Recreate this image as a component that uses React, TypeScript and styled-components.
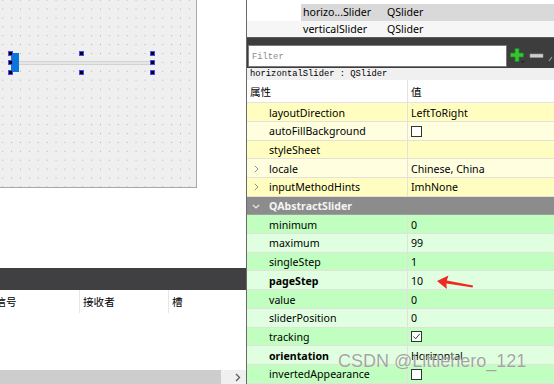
import React from 'react';
import styled, { createGlobalStyle } from 'styled-components';

const GlobalStyle = createGlobalStyle`
  html, body { margin: 0; padding: 0; background: #fff; overflow: hidden; }
  body {
    font-family: "Noto Sans", "Noto Sans CJK SC", sans-serif;
    font-size: 10.6px;
    color: #000;
  }
`;

type Prop = {
    name: string;
    value?: string;
    check?: boolean;
    bold?: boolean;
    expand?: boolean;
};

const widgetProps: Prop[] = [
    { name: 'layoutDirection', value: 'LeftToRight' },
    { name: 'autoFillBackground', check: false },
    { name: 'styleSheet', value: '' },
    { name: 'locale', value: 'Chinese, China', expand: true },
    { name: 'inputMethodHints', value: 'ImhNone', expand: true },
];

const sliderProps: Prop[] = [
    { name: 'minimum', value: '0' },
    { name: 'maximum', value: '99' },
    { name: 'singleStep', value: '1' },
    { name: 'pageStep', value: '10', bold: true },
    { name: 'value', value: '0' },
    { name: 'sliderPosition', value: '0' },
    { name: 'tracking', check: true },
    { name: 'orientation', value: 'Horizontal', bold: true },
    { name: 'invertedAppearance', check: false },
];

const handles = [
    [10.5, 53.5], [10.5, 62.8], [10.5, 72.2],
    [81.8, 53.5], [81.8, 72.2],
    [152.8, 53.5], [152.8, 62.8], [152.8, 72.2],
];

const Check: React.FC<{ on: boolean }> = ({ on }) => (
    <CheckBox>
        {on && (
            <svg width="9" height="9" viewBox="0 0 9 9">
                <path d="M1.5 4.5 L3.6 6.8 L7.8 1.8" fill="none" stroke="#333" strokeWidth="1" />
            </svg>
        )}
    </CheckBox>
);

const PropRow: React.FC<{ p: Prop; hue: 'yellow' | 'green'; alt: boolean }> = ({ p, hue, alt }) => (
    <Row $hue={hue} $alt={alt}>
        <NameCell $bold={p.bold}>
            <Branch>
                {p.expand && (
                    <svg width="5" height="8" viewBox="0 0 5 8">
                        <path d="M0.8 0.8 L4 4 L0.8 7.2" fill="none" stroke="#909090" strokeWidth="1" />
                    </svg>
                )}
            </Branch>
            {p.name}
        </NameCell>
        <ValueCell>{p.check !== undefined ? <Check on={p.check} /> : p.value}</ValueCell>
    </Row>
);

export default function App() {
    return (
        <Page>
            <GlobalStyle />
            <LeftPane>
                <DesignArea>
                    <Canvas>
                        <Groove />
                        <SliderThumb />
                        {handles.map(([x, y], i) => (
                            <Handle key={i} style={{ left: x - 2.5, top: y - 2.5 }} />
                        ))}
                    </Canvas>
                </DesignArea>
                <SignalBar />
                <SignalHeader>
                    <HeadCell>
                        <Clip>信号</Clip>
                    </HeadCell>
                    <HeadCell>接收者</HeadCell>
                    <HeadCell>槽</HeadCell>
                </SignalHeader>
                <SignalBody />
                <HScroll>
                    <Thumb />
                    <ScrollArrow>
                        <svg width="6" height="9" viewBox="0 0 6 9">
                            <path d="M1 1 L4.5 4.5 L1 8" fill="none" stroke="#606060" strokeWidth="1.4" />
                        </svg>
                    </ScrollArrow>
                </HScroll>
            </LeftPane>

            <RightPane>
                <ObjectList>
                    <CutRow />
                    <ObjRow>
                        <ObjIndent />
                        <ObjCells $selected>
                            <ObjName>horizo...Slider</ObjName>
                            <span>QSlider</span>
                        </ObjCells>
                    </ObjRow>
                    <ObjRow $alt>
                        <ObjIndent />
                        <ObjCells>
                            <ObjName>verticalSlider</ObjName>
                            <span>QSlider</span>
                        </ObjCells>
                    </ObjRow>
                </ObjectList>
                <Toolbar>
                    <FilterInput>Filter</FilterInput>
                    <ToolButton>
                        <svg width="16" height="16" viewBox="0 0 16 16">
                            <path d="M5 0.5 H9 V5 H13.5 V9 H9 V13.5 H5 V9 H0.5 V5 H5 Z" fill="#35c435" stroke="#1e8a1e" strokeWidth="0.8" />
                            <path d="M11 13 H15 L13 15 Z" fill="#222" />
                        </svg>
                    </ToolButton>
                    <ToolButton>
                        <svg width="16" height="16" viewBox="0 0 16 16">
                            <rect x="1" y="6" width="13" height="3.5" fill="#cfcfcf" stroke="#9a9a9a" strokeWidth="0.6" />
                        </svg>
                    </ToolButton>
                    <ToolButton>
                        <svg width="6" height="16" viewBox="0 0 6 16">
                            <path d="M1 13 L4 9" stroke="#9a9a9a" strokeWidth="1.2" />
                        </svg>
                    </ToolButton>
                </Toolbar>
                <ClassLabel>horizontalSlider : QSlider</ClassLabel>
                <TableHeader>
                    <HeaderCell>属性</HeaderCell>
                    <HeaderCell>值</HeaderCell>
                </TableHeader>
                {widgetProps.map((p, i) => (
                    <PropRow key={p.name} p={p} hue="yellow" alt={i % 2 === 1} />
                ))}
                <GroupRow>
                    <Branch>
                        <svg width="8" height="5" viewBox="0 0 8 5">
                            <path d="M0.8 0.8 L4 4 L7.2 0.8" fill="none" stroke="#f0f0f0" strokeWidth="1.2" />
                        </svg>
                    </Branch>
                    QAbstractSlider
                </GroupRow>
                {sliderProps.map((p, i) => (
                    <PropRow key={p.name} p={p} hue="green" alt={i % 2 === 1} />
                ))}
            </RightPane>

            <Arrow width="42" height="20" viewBox="0 0 42 20">
                <path d="M3 8 L14.5 2.5 L12.8 7.4 L39 12.6 L38.6 14.6 L12.4 10.6 L12.8 16 Z" fill="#ee2a24" />
            </Arrow>
            <Watermark>CSDN @Littlehero_121</Watermark>
        </Page>
    );
}

const Page = styled.div`
    position: relative;
    display: flex;
    width: 554px;
    height: 384px;
    overflow: hidden;
`;

const LeftPane = styled.div`
    width: 246px;
    display: flex;
    flex-direction: column;
`;

const DesignArea = styled.div`
    height: 268px;
    background: #fff;
`;

const Canvas = styled.div`
    position: relative;
    width: 196px;
    height: 187px;
    border-right: 1px solid #a8a8a8;
    border-bottom: 1px solid #a8a8a8;
    background-color: #efefef;
    background-image: radial-gradient(circle, #b0b0b0 0.6px, transparent 0.95px);
    background-size: 8.9px 8.9px;
    background-position: -1.75px 4.6px;
`;

const Groove = styled.div`
    position: absolute;
    left: 11px;
    top: 60.5px;
    width: 141px;
    height: 2px;
    background: #e6e6e6;
    border: 1px solid #d2d2d2;
`;

const SliderThumb = styled.div`
    position: absolute;
    left: 11px;
    top: 53px;
    width: 8px;
    height: 19px;
    background: #0a78d6;
`;

const Handle = styled.div`
    position: absolute;
    width: 3px;
    height: 3px;
    background: #000;
    border: 1px solid #4848ff;
`;

const SignalBar = styled.div`
    height: 22px;
    background: #404042;
`;

const SignalHeader = styled.div`
    height: 23px;
    display: grid;
    grid-template-columns: 80px 89px 1fr;
    background: #fff;
`;

const HeadCell = styled.div`
    display: flex;
    align-items: center;
    padding-left: 3px;
    overflow: hidden;
    white-space: nowrap;
    border-right: 1px solid #e6e6e6;
    &:first-child {
        padding-left: 0;
    }
    &:last-child {
        border-right: none;
    }
`;

const Clip = styled.span`
    margin-left: -4.5px;
`;

const SignalBody = styled.div`
    flex: 1;
    background: #fff;
`;

const HScroll = styled.div`
    height: 14px;
    display: flex;
    background: #f0f0f0;
`;

const Thumb = styled.div`
    width: 221px;
    background: #cdcdcd;
`;

const ScrollArrow = styled.div`
    flex: 1;
    display: flex;
    align-items: center;
    justify-content: flex-end;
    padding-right: 5px;
`;

const RightPane = styled.div`
    flex: 1;
    display: flex;
    flex-direction: column;
    border-left: 1px solid #6a6a6a;
`;

const ObjectList = styled.div`
    height: 37px;
    background: #fff;
    border-bottom: 1px solid #5a5a5a;
`;

const CutRow = styled.div`
    height: 4px;
    background: #fff;
`;

const ObjRow = styled.div<{ $alt?: boolean }>`
    height: 16.5px;
    display: flex;
    background: ${(p) => (p.$alt ? '#f6f6f6' : '#fff')};
`;

const ObjIndent = styled.div`
    width: 54px;
`;

const ObjCells = styled.div<{ $selected?: boolean }>`
    flex: 1;
    display: flex;
    align-items: center;
    padding-left: 2px;
    background: ${(p) => (p.$selected ? '#d9d9d9' : 'transparent')};
`;

const ObjName = styled.span`
    width: 84px;
`;

const Toolbar = styled.div`
    height: 30px;
    display: flex;
    align-items: flex-end;
    background: #3d3d3d;
    padding: 0 0 1px 1px;
    box-sizing: border-box;
`;

const FilterInput = styled.div`
    width: 259px;
    height: 22px;
    box-sizing: border-box;
    background: #fff;
    border: 1px solid #7a7a7a;
    padding: 1px 3px 0;
    display: flex;
    align-items: center;
    font-family: "Liberation Mono", monospace;
    font-size: 8.8px;
    color: #8a8a8a;
`;

const ToolButton = styled.div`
    height: 22px;
    display: flex;
    align-items: center;
    margin-left: 3px;
`;

const ClassLabel = styled.div`
    height: 12px;
    line-height: 13px;
    background: #f0f0f0;
    padding-left: 3px;
    font-family: "Liberation Mono", monospace;
    font-size: 8.8px;
    white-space: nowrap;
`;

const TableHeader = styled.div`
    height: 23.3px;
    display: grid;
    grid-template-columns: 161px 1fr;
    background: #fff;
    box-sizing: border-box;
    border-bottom: 1px solid #e3e3e3;
`;

const HeaderCell = styled.div`
    display: flex;
    align-items: center;
    padding: 1px 0 0 3px;
    &:first-child {
        border-right: 1px solid #e3e3e3;
    }
`;

const palette = {
    yellow: ['#fffec0', '#ffffe0'],
    green: ['#c0ffc0', '#e0ffe0'],
};

const Row = styled.div<{ $hue: 'yellow' | 'green'; $alt: boolean }>`
    height: 18.7px;
    box-sizing: border-box;
    display: grid;
    grid-template-columns: 161px 1fr;
    background: ${(p) => palette[p.$hue][p.$alt ? 1 : 0]};
    border-bottom: 1px solid #e2e2da;
`;

const NameCell = styled.div<{ $bold?: boolean }>`
    display: flex;
    align-items: center;
    padding-top: 1px;
    font-weight: ${(p) => (p.$bold ? 700 : 400)};
    border-right: 1px solid #e2e2da;
    white-space: nowrap;
`;

const Branch = styled.div`
    width: 22px;
    display: flex;
    align-items: center;
    justify-content: center;
    padding-right: 4px;
    box-sizing: border-box;
`;

const ValueCell = styled.div`
    display: flex;
    align-items: center;
    padding: 1px 0 0 3px;
    white-space: nowrap;
`;

const CheckBox = styled.div`
    width: 11px;
    height: 11px;
    box-sizing: border-box;
    border: 1px solid #333;
    background: #fff;
    display: flex;
    align-items: center;
    justify-content: center;
`;

const GroupRow = styled.div`
    height: 18.7px;
    box-sizing: border-box;
    display: flex;
    align-items: center;
    padding-top: 1px;
    background: #8c8c8c;
    color: #f4f4f4;
    font-weight: 700;
    border-bottom: 1px solid #a0a0a0;
`;

const Arrow = styled.svg`
    position: absolute;
    left: 434px;
    top: 273px;
`;

const Watermark = styled.div`
    position: absolute;
    left: 338px;
    top: 351px;
    font-family: "Liberation Sans", Arial, sans-serif;
    font-size: 18px;
    color: rgba(105, 105, 105, 0.6);
    text-shadow: 0 0 1px rgba(255, 255, 255, 0.9);
    white-space: nowrap;
    pointer-events: none;
`;
